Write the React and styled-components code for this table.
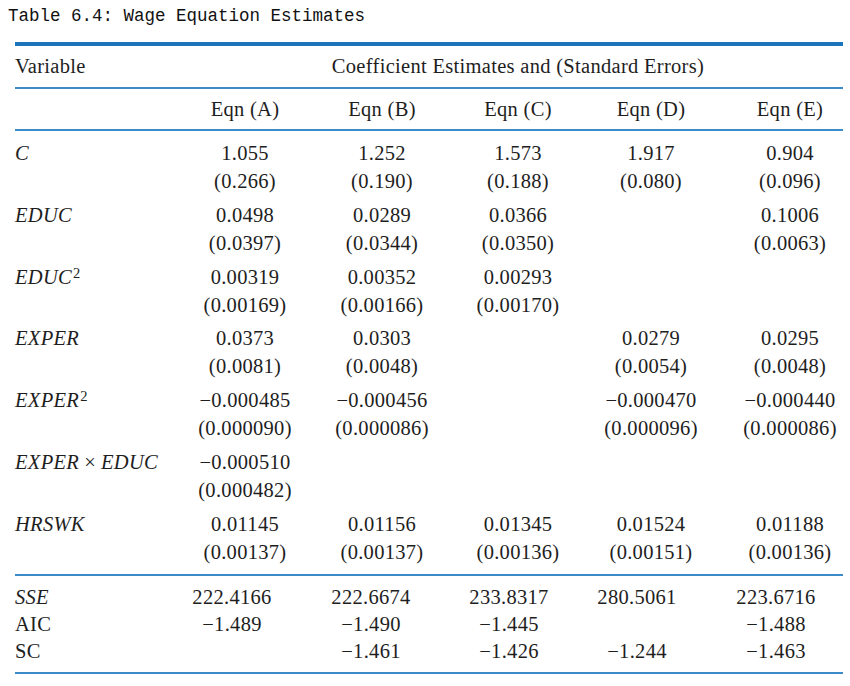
import React from "react";
import styled, { createGlobalStyle } from "styled-components";

const Global = createGlobalStyle`
  html, body { margin: 0; padding: 0; background: #ffffff; }
  body { font-family: "Liberation Serif", "Times New Roman", serif; }
`;

const UPPER = "175px 110px 164px 108px 158px 120px";
const LOWER = "162px 110px 168px 108px 148px 130px";

const Page = styled.div`
  padding-top: 6px;
`;

const Title = styled.h1`
  margin: 0 0 0 8px;
  font-family: "Liberation Mono", "Courier New", monospace;
  font-weight: normal;
  font-size: 17.5px;
  line-height: 20px;
  color: #111;
`;

const Table = styled.div`
  margin: 16px 0 0 15px;
  width: 828px;
  color: #1e1e1e;
  font-family: "Liberation Serif", "Times New Roman", serif;
  font-size: 20.5px;
  letter-spacing: 0.3px;
`;

const Rule = styled.div`
  height: ${(p) => (p.$thick ? "4px" : "2px")};
  background: ${(p) => (p.$thick ? "#1c74bb" : "#3c8cc9")};
`;

const Row = styled.div`
  display: grid;
  grid-template-columns: ${(p) => p.$cols};
  align-items: center;
  height: ${(p) => p.$h}px;
  width: max-content;
`;

const HeadLabel = styled.div`
  white-space: nowrap;
`;

const Spanner = styled.div`
  grid-column: 2 / 7;
  text-align: center;
  white-space: nowrap;
  padding-right: 4px;
`;

const HeadCell = styled.div`
  text-align: center;
  white-space: nowrap;
`;

const Body = styled.div`
  padding: 8px 0 8px;
  display: flex;
  flex-direction: column;
  gap: 5.83px;
`;

const Group = styled.div`
  display: grid;
  grid-template-columns: ${(p) => p.$cols};
  align-items: start;
  line-height: 28px;
  width: max-content;
`;

const Label = styled.div`
  font-style: ${(p) => (p.$upright ? "normal" : "italic")};
  white-space: nowrap;
`;

const Upright = styled.span`
  font-style: normal;
  padding: 0 5px;
`;

const Sup = styled.sup`
  font-style: normal;
  font-size: 14.5px;
  line-height: 0;
  vertical-align: 6px;
  margin-left: 1px;
`;

const Cell = styled.div`
  display: flex;
  flex-direction: column;
  align-items: center;
  white-space: nowrap;
`;

const Summary = styled.div`
  padding: 8.5px 0 6.5px;
  display: flex;
  flex-direction: column;
`;

const SumRow = styled.div`
  display: grid;
  grid-template-columns: ${(p) => p.$cols};
  line-height: 27px;
  width: max-content;
`;

const SumCell = styled.div`
  text-align: center;
  white-space: nowrap;
`;

const rows = [
  {
    key: "c",
    label: "C",
    cells: [
      ["1.055", "(0.266)"],
      ["1.252", "(0.190)"],
      ["1.573", "(0.188)"],
      ["1.917", "(0.080)"],
      ["0.904", "(0.096)"],
    ],
  },
  {
    key: "educ",
    label: "EDUC",
    cells: [
      ["0.0498", "(0.0397)"],
      ["0.0289", "(0.0344)"],
      ["0.0366", "(0.0350)"],
      null,
      ["0.1006", "(0.0063)"],
    ],
  },
  {
    key: "educ2",
    label: (
      <>
        EDUC<Sup>2</Sup>
      </>
    ),
    cells: [
      ["0.00319", "(0.00169)"],
      ["0.00352", "(0.00166)"],
      ["0.00293", "(0.00170)"],
      null,
      null,
    ],
  },
  {
    key: "exper",
    label: "EXPER",
    cells: [
      ["0.0373", "(0.0081)"],
      ["0.0303", "(0.0048)"],
      null,
      ["0.0279", "(0.0054)"],
      ["0.0295", "(0.0048)"],
    ],
  },
  {
    key: "exper2",
    label: (
      <>
        EXPER<Sup>2</Sup>
      </>
    ),
    cells: [
      ["\u22120.000485", "(0.000090)"],
      ["\u22120.000456", "(0.000086)"],
      null,
      ["\u22120.000470", "(0.000096)"],
      ["\u22120.000440", "(0.000086)"],
    ],
  },
  {
    key: "experXeduc",
    label: (
      <>
        EXPER<Upright>×</Upright>EDUC
      </>
    ),
    cells: [["\u22120.000510", "(0.000482)"], null, null, null, null],
  },
  {
    key: "hrswk",
    label: "HRSWK",
    cells: [
      ["0.01145", "(0.00137)"],
      ["0.01156", "(0.00137)"],
      ["0.01345", "(0.00136)"],
      ["0.01524", "(0.00151)"],
      ["0.01188", "(0.00136)"],
    ],
  },
];

const summary = [
  {
    key: "sse",
    label: "SSE",
    italic: true,
    cells: ["222.4166", "222.6674", "233.8317", "280.5061", "223.6716"],
  },
  {
    key: "aic",
    label: "AIC",
    cells: ["\u22121.489", "\u22121.490", "\u22121.445", "", "\u22121.488"],
  },
  {
    key: "sc",
    label: "SC",
    cells: ["", "\u22121.461", "\u22121.426", "\u22121.244", "\u22121.463"],
  },
];

const eqns = ["Eqn (A)", "Eqn (B)", "Eqn (C)", "Eqn (D)", "Eqn (E)"];

export default function App() {
  return (
    <Page>
      <Global />
      <Title>Table 6.4: Wage Equation Estimates</Title>
      <Table>
        <Rule $thick />
        <Row $cols={UPPER} $h={41}>
          <HeadLabel>Variable</HeadLabel>
          <Spanner>Coefficient Estimates and (Standard Errors)</Spanner>
        </Row>
        <Rule />
        <Row $cols={UPPER} $h={40}>
          <div />
          {eqns.map((e) => (
            <HeadCell key={e}>{e}</HeadCell>
          ))}
        </Row>
        <Rule />
        <Body>
          {rows.map((r) => (
            <Group key={r.key} $cols={UPPER}>
              <Label>{r.label}</Label>
              {r.cells.map((c, i) => (
                <Cell key={i}>
                  {c && (
                    <>
                      <span>{c[0]}</span>
                      <span>{c[1]}</span>
                    </>
                  )}
                </Cell>
              ))}
            </Group>
          ))}
        </Body>
        <Rule />
        <Summary>
          {summary.map((r) => (
            <SumRow key={r.key} $cols={LOWER}>
              <Label $upright={!r.italic}>{r.label}</Label>
              {r.cells.map((c, i) => (
                <SumCell key={i}>{c}</SumCell>
              ))}
            </SumRow>
          ))}
        </Summary>
        <Rule />
      </Table>
    </Page>
  );
}
